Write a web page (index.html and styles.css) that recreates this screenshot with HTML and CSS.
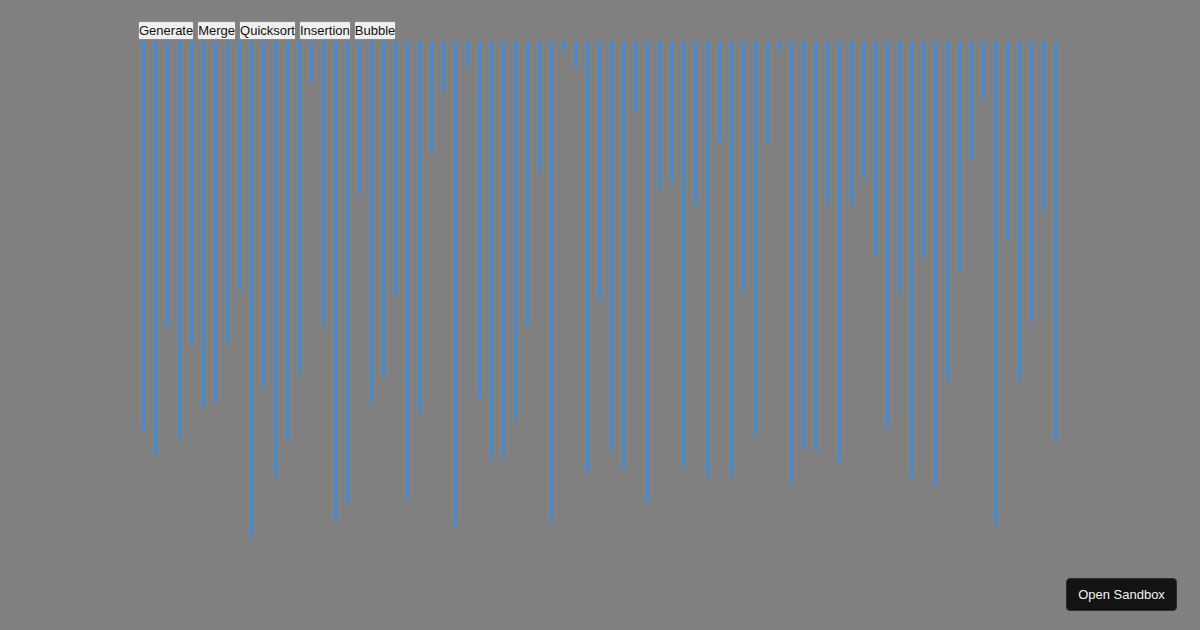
FILE: index.html
```html
<!DOCTYPE html>
<html>
<head>
<meta charset="utf-8">
<link rel="stylesheet" href="styles.css">
</head>
<body>
<div class="app">
  <div class="controls">
    <button class="ctl">Generate</button>
    <button class="ctl">Merge</button>
    <button class="ctl">Quicksort</button>
    <button class="ctl">Insertion</button>
    <button class="ctl">Bubble</button>
  </div>
  <div class="bars">
    <div class="bar" style="height:390px"></div>
    <div class="bar" style="height:414px"></div>
    <div class="bar" style="height:286px"></div>
    <div class="bar" style="height:397px"></div>
    <div class="bar" style="height:303px"></div>
    <div class="bar" style="height:367px"></div>
    <div class="bar" style="height:361px"></div>
    <div class="bar" style="height:302px"></div>
    <div class="bar" style="height:250px"></div>
    <div class="bar" style="height:497px"></div>
    <div class="bar" style="height:346px"></div>
    <div class="bar" style="height:436px"></div>
    <div class="bar" style="height:399px"></div>
    <div class="bar" style="height:332px"></div>
    <div class="bar" style="height:41px"></div>
    <div class="bar" style="height:284px"></div>
    <div class="bar" style="height:482px"></div>
    <div class="bar" style="height:462px"></div>
    <div class="bar" style="height:152px"></div>
    <div class="bar" style="height:362px"></div>
    <div class="bar" style="height:338px"></div>
    <div class="bar" style="height:255px"></div>
    <div class="bar" style="height:458px"></div>
    <div class="bar" style="height:372px"></div>
    <div class="bar" style="height:111px"></div>
    <div class="bar" style="height:51px"></div>
    <div class="bar" style="height:486px"></div>
    <div class="bar" style="height:26px"></div>
    <div class="bar" style="height:358px"></div>
    <div class="bar" style="height:418px"></div>
    <div class="bar" style="height:418px"></div>
    <div class="bar" style="height:380px"></div>
    <div class="bar" style="height:285px"></div>
    <div class="bar" style="height:132px"></div>
    <div class="bar" style="height:482px"></div>
    <div class="bar" style="height:10px"></div>
    <div class="bar" style="height:27px"></div>
    <div class="bar" style="height:432px"></div>
    <div class="bar" style="height:260px"></div>
    <div class="bar" style="height:410px"></div>
    <div class="bar" style="height:428px"></div>
    <div class="bar" style="height:70px"></div>
    <div class="bar" style="height:462px"></div>
    <div class="bar" style="height:148px"></div>
    <div class="bar" style="height:142px"></div>
    <div class="bar" style="height:426px"></div>
    <div class="bar" style="height:165px"></div>
    <div class="bar" style="height:436px"></div>
    <div class="bar" style="height:101px"></div>
    <div class="bar" style="height:436px"></div>
    <div class="bar" style="height:250px"></div>
    <div class="bar" style="height:394px"></div>
    <div class="bar" style="height:104px"></div>
    <div class="bar" style="height:10px"></div>
    <div class="bar" style="height:444px"></div>
    <div class="bar" style="height:408px"></div>
    <div class="bar" style="height:410px"></div>
    <div class="bar" style="height:164px"></div>
    <div class="bar" style="height:422px"></div>
    <div class="bar" style="height:164px"></div>
    <div class="bar" style="height:138px"></div>
    <div class="bar" style="height:214px"></div>
    <div class="bar" style="height:388px"></div>
    <div class="bar" style="height:252px"></div>
    <div class="bar" style="height:436px"></div>
    <div class="bar" style="height:216px"></div>
    <div class="bar" style="height:445px"></div>
    <div class="bar" style="height:340px"></div>
    <div class="bar" style="height:232px"></div>
    <div class="bar" style="height:118px"></div>
    <div class="bar" style="height:58px"></div>
    <div class="bar" style="height:484px"></div>
    <div class="bar" style="height:200px"></div>
    <div class="bar" style="height:340px"></div>
    <div class="bar" style="height:280px"></div>
    <div class="bar" style="height:170px"></div>
    <div class="bar" style="height:402px"></div>
  </div>
</div>
<button class="sandbox">Open Sandbox</button>
</body>
</html>
```

FILE: styles.css
```css
html, body {
  margin: 0;
  padding: 0;
  height: 100%;
}
body {
  background: #808080;
  font-family: "Liberation Sans", Arial, sans-serif;
  overflow: hidden;
}
.app {
  width: 924px;
  margin: 21px auto 0;
}
.controls {
  display: flex;
  gap: 3px;
  height: 20px;
}
.ctl {
  font-family: "Liberation Sans", Arial, sans-serif;
  font-size: 13px;
  color: #111;
  background: #efefef;
  border: 1px solid #8a8a8a;
  border-radius: 2px;
  padding: 1px 0;
  margin: 0;
  line-height: normal;
  height: 19px;
}
.bars {
  display: flex;
  align-items: flex-start;
}
.bar {
  width: 2px;
  margin: 0 5px;
  background: #1e90ff;
}
.sandbox {
  position: absolute;
  right: 23px;
  bottom: 19px;
  width: 111px;
  height: 33px;
  background: #131313;
  color: #f2f2f2;
  border: 1px solid #2e2e2e;
  border-radius: 4px;
  font-family: "Liberation Sans", Arial, sans-serif;
  font-size: 13px;
  padding: 0;
}
```
